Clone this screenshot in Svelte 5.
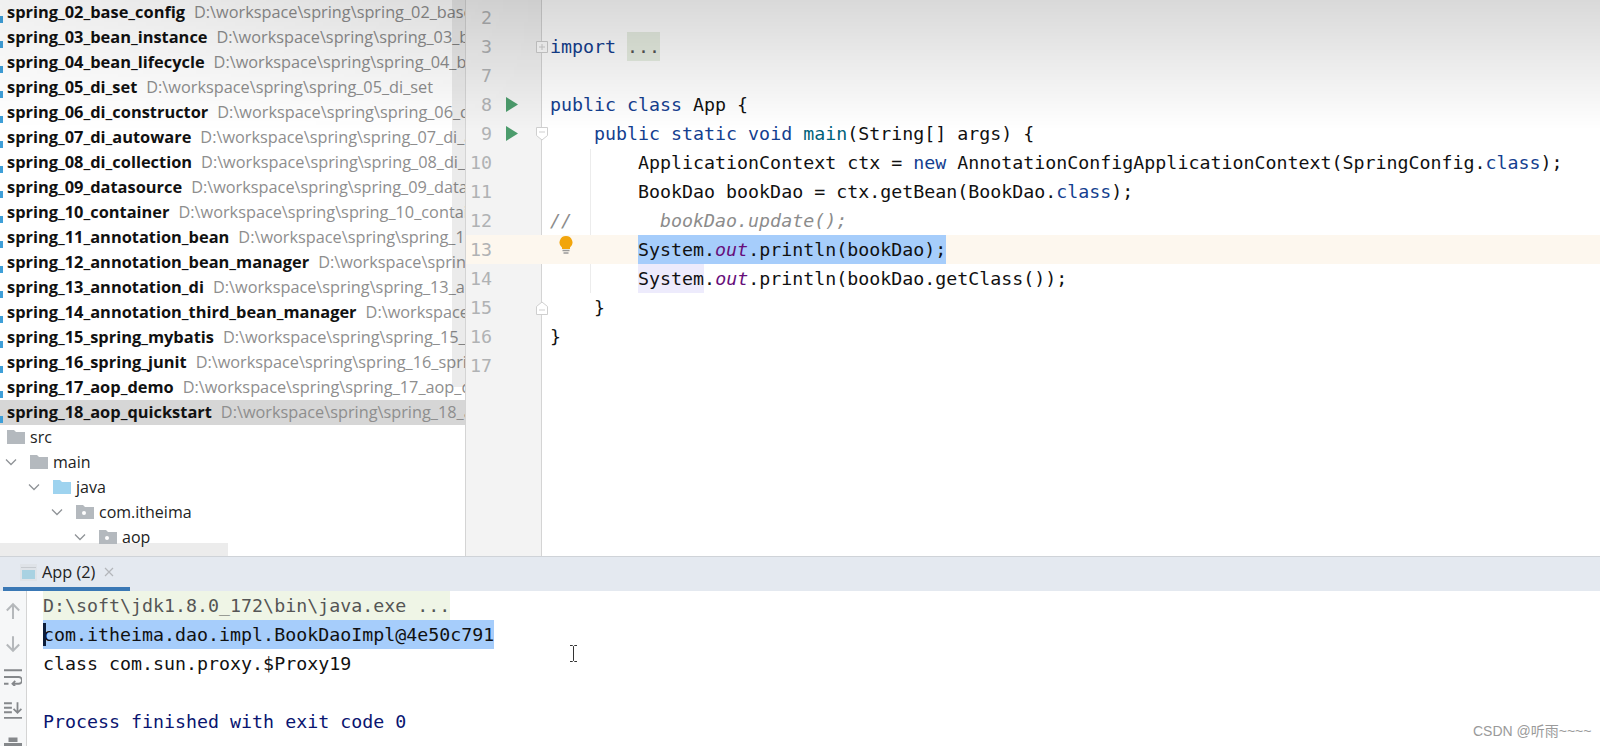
<script>
  const projects = [
    'spring_02_base_config',
    'spring_03_bean_instance',
    'spring_04_bean_lifecycle',
    'spring_05_di_set',
    'spring_06_di_constructor',
    'spring_07_di_autoware',
    'spring_08_di_collection',
    'spring_09_datasource',
    'spring_10_container',
    'spring_11_annotation_bean',
    'spring_12_annotation_bean_manager',
    'spring_13_annotation_di',
    'spring_14_annotation_third_bean_manager',
    'spring_15_spring_mybatis',
    'spring_16_spring_junit',
    'spring_17_aop_demo',
    'spring_18_aop_quickstart'
  ];

  const tree = [
    { name: 'src', level: 0, icon: 'plain', arrow: false },
    { name: 'main', level: 1, icon: 'plain', arrow: true },
    { name: 'java', level: 2, icon: 'blue', arrow: true },
    { name: 'com.itheima', level: 3, icon: 'pkg', arrow: true },
    { name: 'aop', level: 4, icon: 'pkg', arrow: true }
  ];

  const lines = [
    { n: 2, toks: [] },
    { n: 3, fold: 'plus', toks: [['import', 'kw'], [' '], ['...', 'folded']] },
    { n: 7, toks: [] },
    { n: 8, run: true, toks: [['public class', 'kw'], [' App {']] },
    { n: 9, run: true, fold: 'open', toks: [['    '], ['public static void', 'kw'], [' '], ['main', 'fn'], ['(String[] args) {']] },
    { n: 10, toks: [['        ApplicationContext ctx = '], ['new', 'kw'], [' AnnotationConfigApplicationContext(SpringConfig.'], ['class', 'kw'], [');']] },
    { n: 11, toks: [['        BookDao bookDao = ctx.getBean(BookDao.'], ['class', 'kw'], [');']] },
    { n: 12, toks: [['//        bookDao.update();', 'cm']] },
    { n: 13, caret: true, toks: [['        '], ['System.', 'sel'], ['out', 'fld sel'], ['.println(bookDao);', 'sel']] },
    { n: 14, toks: [['        '], ['System', 'usage'], ['.'], ['out', 'fld'], ['.println(bookDao.getClass());']] },
    { n: 15, fold: 'close', toks: [['    }']] },
    { n: 16, toks: [['}']] },
    { n: 17, toks: [] }
  ];
</script>

<div class="ide">
  <div class="top">
    <aside class="left">
      <div class="recent">
        {#each projects as name, i}
          <div class="project" class:current={i === projects.length - 1}>
            <i class="sliver"></i>
            <b>{name}</b>
            <span class="path">D:\workspace\spring\{name}</span>
          </div>
        {/each}
        <div class="scrollbar"></div>
      </div>
      <div class="tree">
        {#each tree as node}
          <div class="node" style="padding-left: {7 + node.level * 23}px">
            {#if node.arrow}
              <svg class="arrow" viewBox="0 0 12 12" width="12" height="12">
                <path d="M1 3.500l5 5 5-5" fill="none" stroke="#8f9397" stroke-width="1.300" />
              </svg>
            {/if}
            <svg class="folder" viewBox="0 0 18 16" width="18" height="16">
              <path d="M0 1h7l2 2h9v12H0z" fill={node.icon === 'blue' ? '#9ed3ef' : '#b4b9be'} />
              {#if node.icon === 'pkg'}
                <circle cx="8" cy="9" r="2" fill="#fff" />
              {/if}
            </svg>
            <span>{node.name}</span>
          </div>
        {/each}
        <div class="node hovered">
          <svg class="dot" viewBox="0 0 16 16" width="16" height="16"><circle cx="8" cy="8" r="7.500" fill="#9cc6e6" /></svg>
          <span>BeanAdvice</span>
        </div>
      </div>
    </aside>

    <main class="editor">
      <div class="guide"></div>
      {#each lines as line}
        <div class="line" class:caret={line.caret}>
          <span class="num">{line.n}</span>
          <span class="marks">
            <span class="run-slot">
              {#if line.run}
                <svg viewBox="0 0 12 15" width="12" height="15"><path d="M0 0l12 7.500L0 15z" fill="#4c9c6c" /></svg>
              {/if}
            </span>
            <span class="fold-slot">
              {#if line.fold === 'plus'}
                <svg viewBox="0 0 12 12" width="12" height="12">
                  <path d="M.5.500h11v11H.5z M3 6h6 M6 3v6" fill="#fff" stroke="#cfcfcf" />
                </svg>
              {:else if line.fold === 'open'}
                <svg viewBox="0 0 12 14" width="12" height="14">
                  <path d="M.5.500h11v8L6 13 .5 8.500z M3 5h6" fill="#fff" stroke="#cfcfcf" />
                </svg>
              {:else if line.fold === 'close'}
                <svg viewBox="0 0 12 14" width="12" height="14">
                  <path d="M.5 13.500v-8L6 1l5.500 4.500v8z M3 9h6" fill="#fff" stroke="#cfcfcf" />
                </svg>
              {/if}
            </span>
          </span>
          <span class="code">{#each line.toks as [text, cls]}<span class={cls}>{text}</span>{/each}</span>
          {#if line.caret}
            <svg class="bulb" viewBox="0 0 14 19" width="14" height="19">
              <path d="M7 0a6.500 6.500 0 0 1 4 11.600V13H3v-1.400A6.500 6.500 0 0 1 7 0z" fill="#f2a50c" />
              <path d="M3.500 14.500h7 M4.500 17h5" stroke="#9a9a9a" stroke-width="1.400" />
            </svg>
          {/if}
        </div>
      {/each}
    </main>
  </div>

  <section class="panel">
    <header class="tabs">
      <div class="tab">
        <svg viewBox="0 0 17 17" width="17" height="17">
          <path d="M0 0h17v17H0z" fill="#dfe3e8" />
          <path d="M1 3.500h15" stroke="#c6cacf" />
          <path d="M2 6h13v9H2z" fill="#a9d2e2" />
        </svg>
        <span>App (2)</span>
        <svg class="close" viewBox="0 0 10 10" width="10" height="10">
          <path d="M1 1l8 8M9 1l-8 8" stroke="#b3b6ba" stroke-width="1.200" />
        </svg>
      </div>
    </header>
    <div class="run">
      <nav class="tools">
        <svg viewBox="0 0 16 16"><path d="M8 15V2M2.500 7.500L8 2l5.500 5.500" fill="none" stroke="#b5b8bb" stroke-width="1.800" /></svg>
        <svg viewBox="0 0 16 16"><path d="M8 1v13M2.500 8.500L8 14l5.500-5.500" fill="none" stroke="#b5b8bb" stroke-width="1.800" /></svg>
        <svg viewBox="0 0 16 16"><path d="M0 2h16M0 8h13a3 3 0 0 1 0 6H8M0 14h4M10 11.500L7.500 14l2.500 2.500" fill="none" stroke="#85888b" stroke-width="1.600" /></svg>
        <svg viewBox="0 0 16 16"><path d="M0 2h7M0 6h7M0 10h7M0 15h16M12 1v9M8.500 7l3.500 3.500L15.500 7" fill="none" stroke="#85888b" stroke-width="1.600" /></svg>
        <svg viewBox="0 0 16 16"><path d="M4 3h8v4H4z M0 8h16v6H0z" fill="#85888b" /></svg>
      </nav>
      <div class="console">
        <div><span class="cmd">D:\soft\jdk1.8.0_172\bin\java.exe ...</span></div>
        <div><span class="picked">com.itheima.dao.impl.BookDaoImpl@4e50c791</span></div>
        <div>class com.sun.proxy.$Proxy19</div>
        <div>&nbsp;</div>
        <div class="exit">Process finished with exit code 0</div>
      </div>
    </div>
  </section>

  <div class="shade"></div>
  <svg class="ibeam" viewBox="0 0 9 17" width="9" height="17">
    <path d="M1 .500h2.500l1 1 1-1H8M4.500 1.500v14M1 16.500h2.500l1-1 1 1H8" fill="none" stroke="#333" />
  </svg>
  <div class="mark">CSDN @听雨~~~~</div>
</div>

<style>
  :global(body) {
    margin: 0;
    background: #fff;
  }

  .ide {
    position: relative;
    width: 1600px;
    height: 746px;
    overflow: hidden;
    display: flex;
    flex-direction: column;
    font-family: "Open Sans", "Noto Sans", sans-serif;
    color: #111;
  }

  .top {
    height: 556px;
    display: flex;
  }

  .left {
    width: 465px;
    flex: none;
    border-right: 1px solid #d4d4d4;
    display: flex;
    flex-direction: column;
    overflow: hidden;
  }

  .recent {
    position: relative;
  }

  .project {
    height: 25px;
    box-sizing: border-box;
    padding: 0 0 2px 7px;
    display: flex;
    align-items: center;
    gap: 9px;
    font-size: 16.3px;
    white-space: nowrap;
    overflow: hidden;
    position: relative;
  }
  .project.current {
    background: #d6d6d6;
  }
  .project b {
    font-weight: 700;
    font-size: 16.4px;
    color: #111;
  }
  .path {
    color: #8e8e8e;
  }

  .sliver {
    position: absolute;
    left: 0;
    bottom: 2px;
    width: 3px;
    height: 7px;
    background: #3f9fd8;
  }

  .scrollbar {
    position: absolute;
    top: 0;
    right: 0;
    width: 13px;
    height: 387px;
    background: rgba(0, 0, 0, 0.08);
  }

  .tree {
    flex: 1;
    overflow: hidden;
    font-size: 16px;
    color: #222;
  }

  .node {
    height: 25px;
    box-sizing: border-box;
    padding-bottom: 2px;
    display: flex;
    align-items: center;
    position: relative;
    gap: 5px;
  }
  .arrow {
    position: absolute;
    margin-left: -25px;
    top: 6px;
  }
  .folder {
    flex: none;
  }
  .node.hovered {
    position: static;
    width: 228px;
    height: 32px;
    margin-top: -7px;
    padding: 7px 0 0 122px;
    background: #ececec;
  }

  .editor {
    flex: 1;
    position: relative;
    padding-top: 3px;
    background: linear-gradient(to right, #f3f3f3 75px, #d4d4d4 75px, #d4d4d4 76px, #fff 76px);
    font-family: "DejaVu Sans Mono", monospace;
    font-size: 18.3px;
  }

  .guide {
    position: absolute;
    left: 124px;
    top: 149px;
    height: 144px;
    width: 1px;
    background: #ececec;
  }

  .line {
    height: 29px;
    line-height: 29px;
    display: flex;
    position: relative;
  }
  .line.caret {
    background: #fdf7ee;
  }

  .num {
    width: 26px;
    flex: none;
    text-align: right;
    color: #b0b2b4;
    white-space: nowrap;
  }

  .marks {
    width: 58px;
    flex: none;
    display: flex;
  }
  .run-slot {
    width: 44px;
    padding-left: 14px;
    box-sizing: border-box;
    display: flex;
    align-items: center;
  }
  .fold-slot {
    display: flex;
    align-items: center;
  }

  .code {
    white-space: pre;
  }
  .code span {
    display: inline-block;
    height: 29px;
  }

  .kw {
    color: #14408f;
  }
  .fn {
    color: #00627a;
  }
  .fld {
    color: #660e7a;
    font-style: italic;
  }
  .cm {
    color: #8c8c8c;
    font-style: italic;
  }
  .code .sel {
    background: #a6cdfb;
  }
  .usage {
    background: #edebfc;
  }
  .folded {
    background: #e8efe3;
    color: #555;
  }

  .bulb {
    position: absolute;
    left: 93px;
    top: 1px;
  }

  .panel {
    flex: 1;
    display: flex;
    flex-direction: column;
    min-height: 0;
  }

  .tabs {
    height: 35px;
    flex: none;
    background: #e4e9f0;
    border-top: 1px solid #cfd3d8;
    box-sizing: border-box;
  }

  .tab {
    width: 127px;
    height: 34px;
    margin-left: 3px;
    padding: 0 0 0 17px;
    box-sizing: border-box;
    border-bottom: 4px solid #3a78b5;
    display: flex;
    align-items: center;
    gap: 5px;
    font-size: 16.3px;
    color: #222;
  }
  .close {
    margin-left: 4px;
  }

  .run {
    flex: 1;
    display: flex;
    min-height: 0;
  }

  .tools {
    width: 26px;
    flex: none;
    border-right: 1px solid #d4d4d4;
    background: #f6f7f8;
    display: flex;
    flex-direction: column;
    padding-top: 11px;
    gap: 15px;
    align-items: center;
    overflow: hidden;
  }
  .tools svg {
    width: 18px;
    height: 18px;
    flex: none;
  }

  .console {
    padding-left: 16px;
    font-family: "DejaVu Sans Mono", monospace;
    font-size: 18.3px;
    line-height: 29px;
    color: #111;
  }
  .console div {
    height: 29px;
    white-space: pre;
  }
  .console span {
    display: inline-block;
    height: 29px;
    position: relative;
  }
  .cmd {
    background: #eff5e6;
    color: #555;
  }
  .picked {
    background: #a6cdfb;
  }
  .picked::before {
    content: '';
    position: absolute;
    left: 0;
    top: 3px;
    width: 3px;
    height: 23px;
    background: #0c1d3a;
  }
  .console .exit {
    color: #0a1570;
  }

  .shade {
    position: absolute;
    top: 0;
    left: 0;
    right: 0;
    height: 130px;
    background: linear-gradient(rgba(0, 0, 0, 0.15), rgba(0, 0, 0, 0));
    mask-image: linear-gradient(to right, rgba(0, 0, 0, 0.4), #000 540px);
    pointer-events: none;
  }

  .ibeam {
    position: absolute;
    left: 569px;
    top: 645px;
  }

  .mark {
    position: absolute;
    left: 1473px;
    top: 720px;
    font-family: "Liberation Sans", "Noto Sans CJK SC", sans-serif;
    font-size: 14px;
    color: #9a9a9a;
    white-space: nowrap;
  }
</style>
